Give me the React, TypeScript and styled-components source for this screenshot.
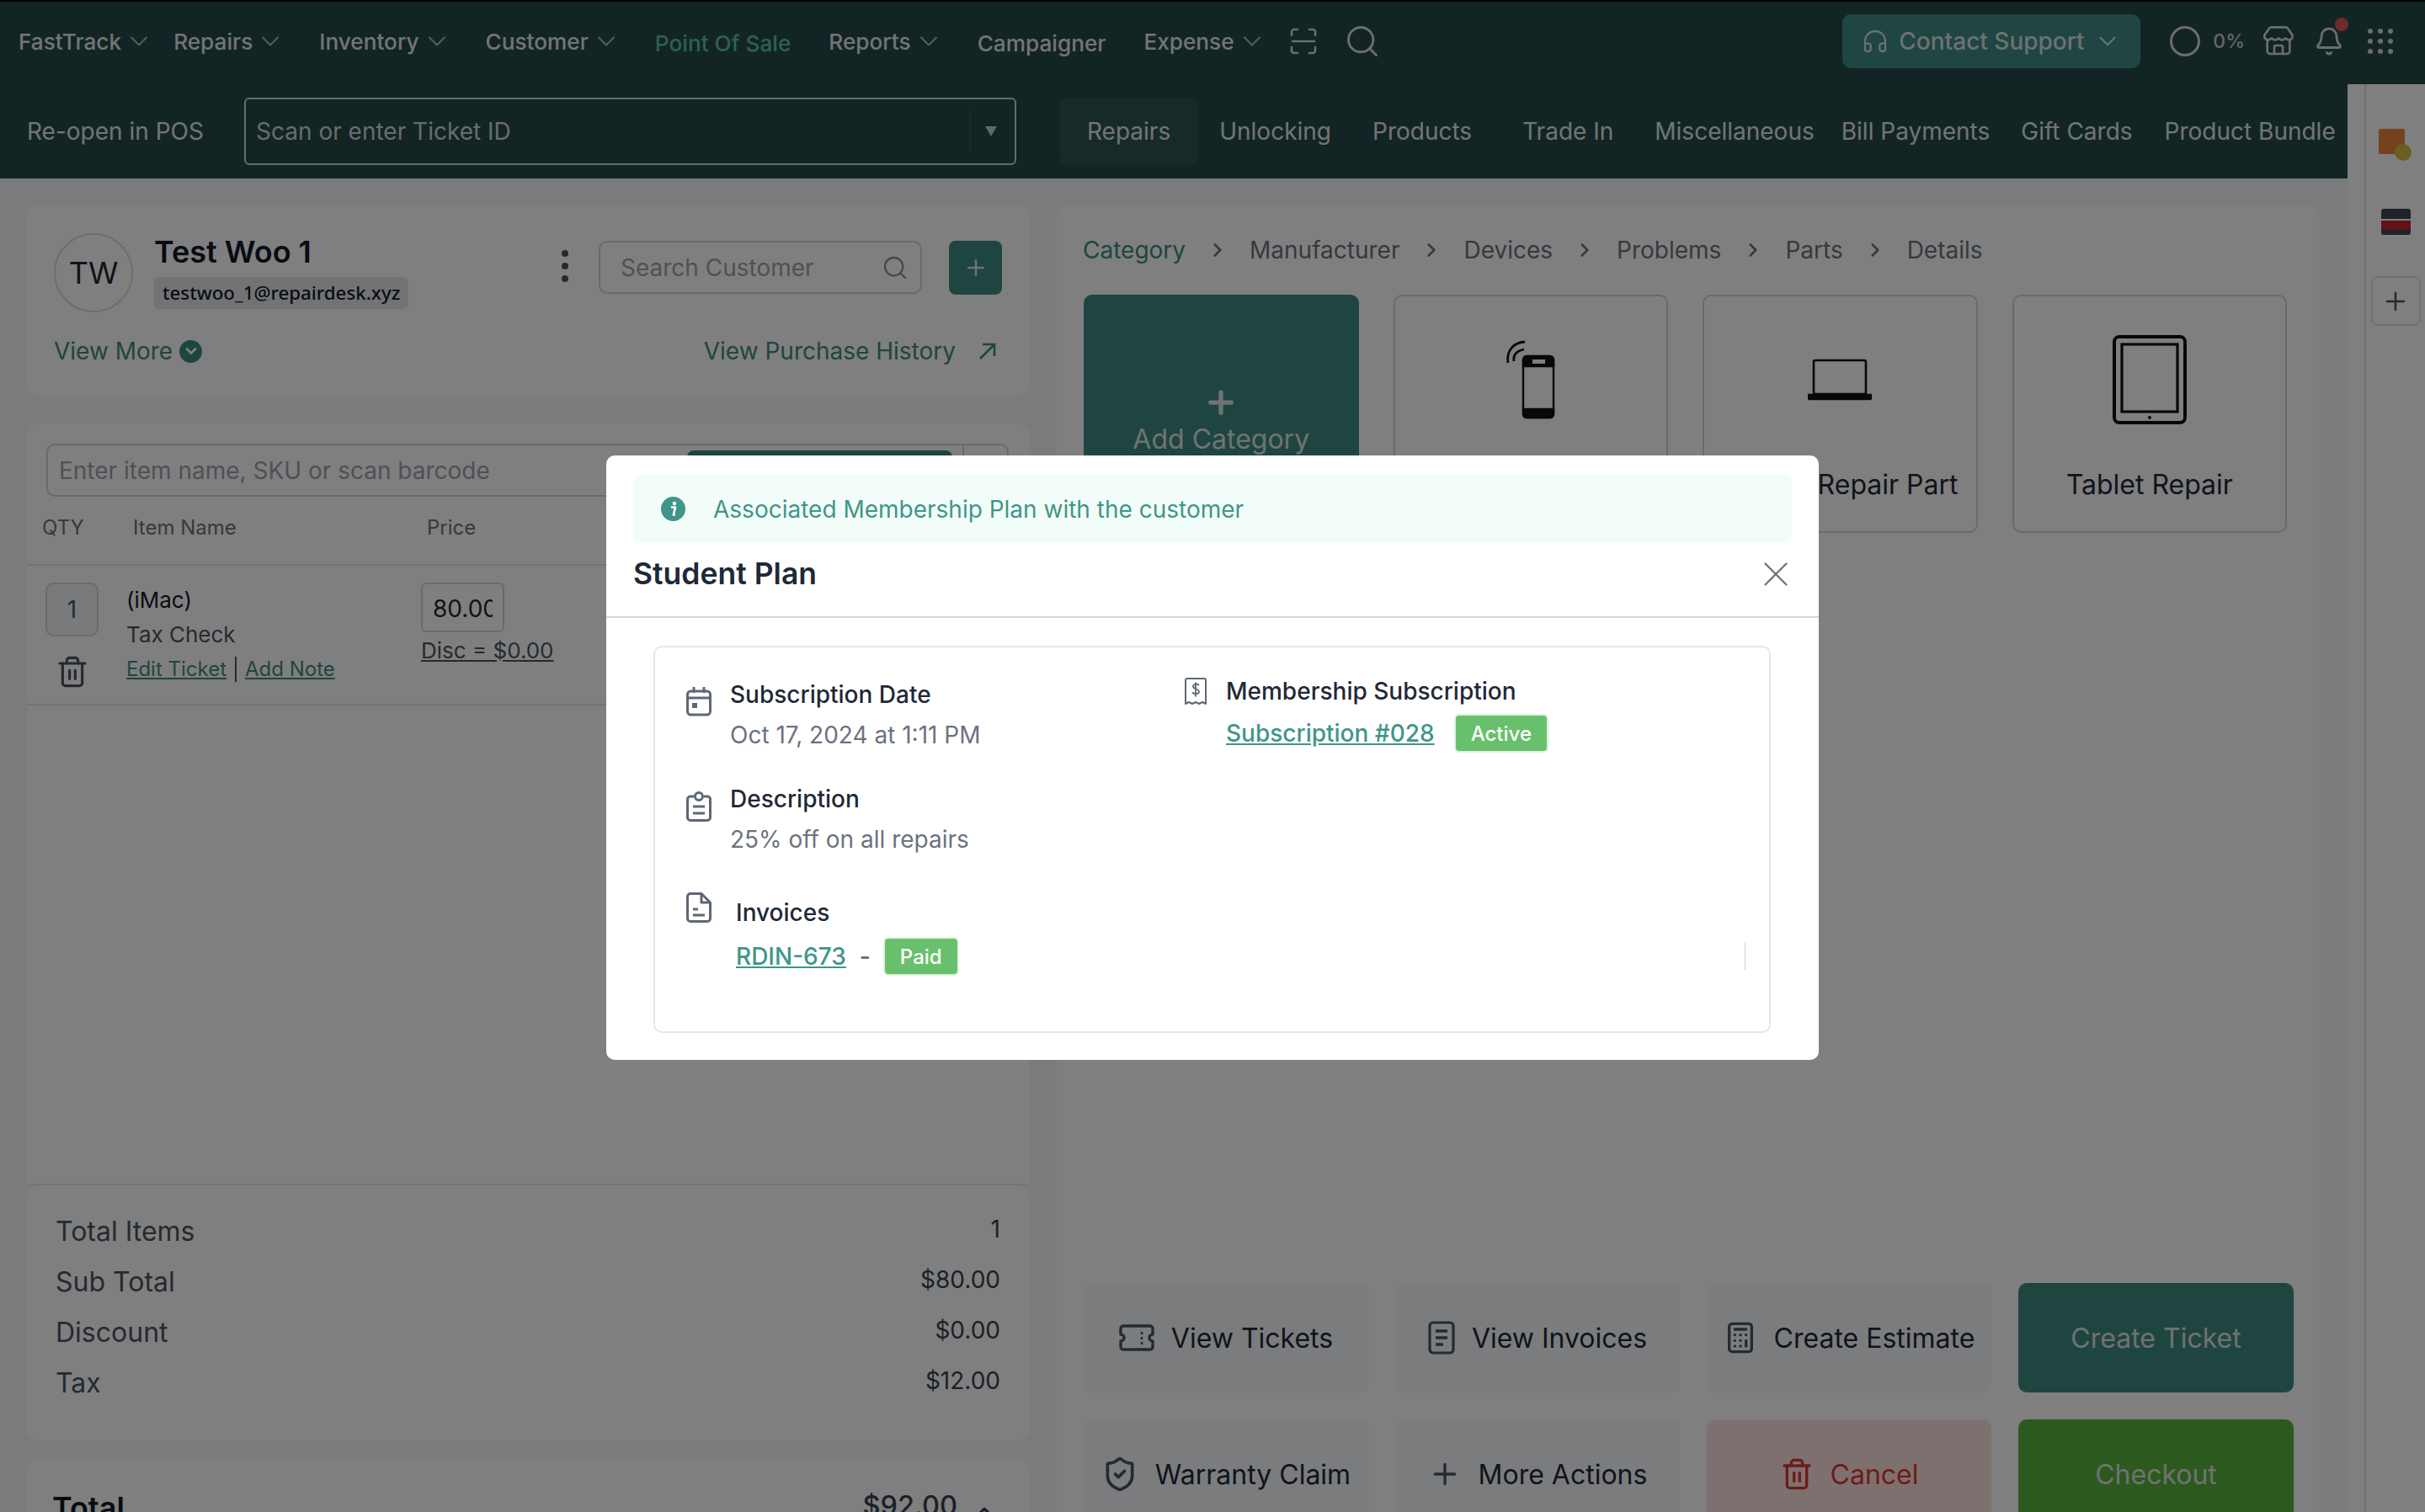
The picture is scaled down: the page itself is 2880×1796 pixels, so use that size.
import styled, { createGlobalStyle } from 'styled-components'
import {
  Bell,
  Calculator,
  ChevronDown,
  ChevronRight,
  ChevronUp,
  Headphones,
  Plus,
  Search,
  ShieldCheck,
  Store,
  Trash2,
  X,
} from 'lucide-react'

const GlobalStyle = createGlobalStyle`
  html, body {
    margin: 0;
    padding: 0;
    background: #f4f6f9;
  }
  * {
    box-sizing: border-box;
  }
  body {
    font-family: Inter, "Noto Sans", "Liberation Sans", sans-serif;
    color: #1f2937;
  }
`

const navItems = [
  { label: 'FastTrack', chevron: true, tight: true },
  { label: 'Repairs', chevron: true },
  { label: 'Inventory', chevron: true },
  { label: 'Customer', chevron: true },
  { label: 'Point Of Sale', active: true },
  { label: 'Reports', chevron: true },
  { label: 'Campaigner' },
  { label: 'Expense', chevron: true },
]

const tabs = [
  { label: 'Unlocking', gap: 26 },
  { label: 'Products', gap: 49 },
  { label: 'Trade In', gap: 60 },
  { label: 'Miscellaneous', gap: 49 },
  { label: 'Bill Payments', gap: 32 },
  { label: 'Gift Cards', gap: 37 },
  { label: 'Product Bundle', gap: 38 },
]

const crumbs = ['Category', 'Manufacturer', 'Devices', 'Problems', 'Parts', 'Details']

const totals = [
  { label: 'Total Items', value: '1' },
  { label: 'Sub Total', value: '$80.00' },
  { label: 'Discount', value: '$0.00' },
  { label: 'Tax', value: '$12.00' },
]

function ScanIcon() {
  return (
    <svg width="32" height="32" viewBox="0 0 32 32" fill="none" stroke="#d7dbe0" strokeWidth="2.6" strokeLinecap="round">
      <path d="M2 9V5a3 3 0 0 1 3-3h4M23 2h4a3 3 0 0 1 3 3v4M2 23v4a3 3 0 0 0 3 3h4M23 30h4a3 3 0 0 0 3-3v-4M3 16h26" />
    </svg>
  )
}

function PhoneIcon() {
  return (
    <svg width="58" height="94" viewBox="0 0 58 94" fill="none" stroke="#111" strokeWidth="2.4">
      <rect x="20" y="19" width="36" height="73" rx="4" />
      <path d="M20 24a4 4 0 0 1 4-4h28a4 4 0 0 1 4 4v7H20z" fill="#111" />
      <rect x="31" y="23" width="15" height="5" fill="#fff" stroke="none" />
      <path d="M20 82h36v6a4 4 0 0 1-4 4H24a4 4 0 0 1-4-4z" fill="#111" />
      <path d="M2 27C0 14 7 3 22 2" strokeWidth="2.8" />
      <path d="M9 25c-1-7 2-12 12-14" strokeWidth="2.8" />
    </svg>
  )
}

function LaptopIcon() {
  return (
    <svg width="76" height="50" viewBox="0 0 76 50" fill="none" stroke="#111" strokeWidth="2.6">
      <rect x="7" y="2" width="62" height="40" rx="2" />
      <path d="M1 43h74v4a1 1 0 0 1-1 1H2a1 1 0 0 1-1-1z" fill="#111" />
    </svg>
  )
}

function TabletIcon() {
  return (
    <svg width="88" height="106" viewBox="0 0 88 106" fill="none" stroke="#111">
      <rect x="2" y="2" width="84" height="102" rx="6" strokeWidth="4" />
      <rect x="11" y="11" width="66" height="80" strokeWidth="3.2" />
      <circle cx="44" cy="98" r="2" fill="#111" stroke="none" />
    </svg>
  )
}

function InfoDot() {
  return (
    <svg width="29" height="29" viewBox="0 0 29 29">
      <circle cx="14.5" cy="14.5" r="14.5" fill="#3f9688" />
      <circle cx="16" cy="8" r="2.2" fill="#fff" />
      <path d="M12 12.5h5l-2.2 9h2" fill="none" stroke="#fff" strokeWidth="2.6" strokeLinejoin="round" />
    </svg>
  )
}

function CalendarIcon() {
  return (
    <svg width="30" height="36" viewBox="0 0 30 36" fill="none" stroke="#5f6776" strokeWidth="3">
      <rect x="1.5" y="6" width="27" height="28" rx="4" />
      <path d="M1.500 14h27M9 1v7M21 1v7" />
      <rect x="7" y="20" width="6" height="6" fill="#5f6776" stroke="none" />
    </svg>
  )
}

function ClipboardIcon() {
  return (
    <svg width="30" height="36" viewBox="0 0 30 36" fill="none" stroke="#5f6776" strokeWidth="3">
      <path d="M9 6H5a3.500 3.500 0 0 0-3.500 3.500V31A3.500 3.500 0 0 0 5 34.500h20a3.500 3.500 0 0 0 3.500-3.500V9.500A3.500 3.500 0 0 0 25 6h-4" />
      <circle cx="15" cy="6" r="4.500" />
      <path d="M8 18h14M8 26h14" />
    </svg>
  )
}

function InvoiceDocIcon() {
  return (
    <svg width="30" height="36" viewBox="0 0 30 36" fill="none" stroke="#5f6776" strokeWidth="3" strokeLinejoin="round">
      <path d="M5 1.500h13l10.500 10.500V31a3.500 3.500 0 0 1-3.500 3.500H5A3.500 3.500 0 0 1 1.500 31V5A3.500 3.500 0 0 1 5 1.500z" />
      <path d="M18 2v10h10M8 20h6M8 27h14" />
    </svg>
  )
}

function ReceiptIcon() {
  return (
    <svg width="28" height="34" viewBox="0 0 28 34" fill="none" stroke="#5f6776" strokeWidth="2">
      <path d="M2 31V3a2 2 0 0 1 2-2h20a2 2 0 0 1 2 2v28l-4-2-4 2-4-2-4 2-4-2-4 2z" strokeLinejoin="round" />
      <path d="M18 9c-1-2-7-2-7 1.500s7 2.500 7 6-6 3-8 1M14 5.500v17" strokeWidth="1.8" />
    </svg>
  )
}

function TicketIcon() {
  return (
    <svg width="42" height="34" viewBox="0 0 42 34" fill="none" stroke="#4b5563" strokeWidth="3.4" strokeLinejoin="round">
      <path d="M2 6a3 3 0 0 1 3-3h32a3 3 0 0 1 3 3v7a4 4 0 0 0 0 8v7a3 3 0 0 1-3 3H5a3 3 0 0 1-3-3v-7a4 4 0 0 0 0-8z" />
      <path d="M27 10v3M27 16v3M27 22v3" strokeWidth="2.6" />
    </svg>
  )
}

function InvoiceIcon() {
  return (
    <svg width="32" height="40" viewBox="0 0 32 40" fill="none" stroke="#4b5563" strokeWidth="3.2">
      <rect x="2" y="2" width="28" height="36" rx="4" />
      <path d="M9 12h14M9 20h14M9 28h9" strokeWidth="3.6" />
    </svg>
  )
}

export default function App() {
  return (
    <>
      <GlobalStyle />
      <Page>
        <TopBar>
          <NavList>
            {navItems.map((item) => (
              <NavItem key={item.label} $active={item.active} $plain={!item.chevron} $tight={item.tight}>
                {item.label}
                {item.chevron && <ChevronDown size={36} strokeWidth={1.4} color="#aeb6bb" />}
              </NavItem>
            ))}
            <NavIcon $gap={-13}>
              <ScanIcon />
            </NavIcon>
            <NavIcon $gap={-13}>
              <Search size={44} strokeWidth={1.6} color="#d7dbe0" />
            </NavIcon>
          </NavList>
          <TopRight>
            <SupportButton>
              <Headphones size={32} strokeWidth={1.7} />
              <span>Contact Support</span>
              <ChevronDown size={34} strokeWidth={1.6} />
            </SupportButton>
            <Progress>
              <ProgressRing />
              <span>0%</span>
            </Progress>
            <StoreWrap>
              <Store size={40} strokeWidth={1.6} color="#d7dbe0" />
            </StoreWrap>
            <BellWrap>
              <Bell size={36} strokeWidth={1.9} color="#d7dbe0" />
              <BellDot />
            </BellWrap>
            <DotGrid>
              {Array.from({ length: 9 }).map((_, i) => (
                <i key={i} />
              ))}
            </DotGrid>
          </TopRight>
        </TopBar>

        <Body>
          <Content>
            <SubBar>
              <ReopenLabel>Re-open in POS</ReopenLabel>
              <TicketSelect>
                <span>Scan or enter Ticket ID</span>
                <SelectArrow />
              </TicketSelect>
              <ActiveTab>Repairs</ActiveTab>
              {tabs.map((tab) => (
                <Tab key={tab.label} $gap={tab.gap}>
                  {tab.label}
                </Tab>
              ))}
            </SubBar>

            <Main>
              <LeftColumn>
                <CustomerCard>
                  <CustomerTop>
                    <Avatar>TW</Avatar>
                    <CustomerInfo>
                      <CustomerName>Test Woo 1</CustomerName>
                      <EmailChip>testwoo_1@repairdesk.xyz</EmailChip>
                    </CustomerInfo>
                    <MenuDots>
                      <i />
                      <i />
                      <i />
                    </MenuDots>
                    <CustomerSearch>
                      <span>Search Customer</span>
                      <Search size={32} strokeWidth={1.7} color="#8b929c" />
                    </CustomerSearch>
                    <AddButton>
                      <Plus size={30} strokeWidth={2} />
                    </AddButton>
                  </CustomerTop>
                  <CustomerLinks>
                    <ViewMore>
                      View More
                      <CheckCircle>
                        <ChevronDown size={20} strokeWidth={3.4} />
                      </CheckCircle>
                    </ViewMore>
                    <HistoryLink>
                      View Purchase History
                      <svg width="22" height="22" viewBox="0 0 22 22" fill="none" stroke="#3e8a80" strokeWidth="2.6">
                        <path d="M3 20 19 4M6 3h14v14" />
                      </svg>
                    </HistoryLink>
                  </CustomerLinks>
                </CustomerCard>

                <ItemsCard>
                  <ItemSearch>
                    <ItemPlaceholder>Enter item name, SKU or scan barcode</ItemPlaceholder>
                    <ItemSearchButton />
                    <ItemDivider />
                  </ItemSearch>
                  <ItemsHeader>
                    <span>QTY</span>
                    <span>Item Name</span>
                    <span>Price</span>
                  </ItemsHeader>
                  <ItemRow>
                    <QtyCell>
                      <QtyBox>1</QtyBox>
                      <Trash2 size={40} strokeWidth={1.9} color="#4b5563" />
                    </QtyCell>
                    <NameCell>
                      <ItemTitle>(iMac)</ItemTitle>
                      <ItemSub>Tax Check</ItemSub>
                      <ItemLinks>
                        <a>Edit Ticket</a>
                        <LinkBar />
                        <a>Add Note</a>
                      </ItemLinks>
                    </NameCell>
                    <PriceCell>
                      <PriceInput readOnly value="80.00" />
                      <DiscLink>Disc = $0.00</DiscLink>
                    </PriceCell>
                  </ItemRow>
                </ItemsCard>

                <SummaryCard>
                  {totals.map((row) => (
                    <SummaryRow key={row.label}>
                      <SummaryLabel>{row.label}</SummaryLabel>
                      <SummaryValue>{row.value}</SummaryValue>
                    </SummaryRow>
                  ))}
                </SummaryCard>

                <TotalCard>
                  <TotalLabel>Total</TotalLabel>
                  <TotalValue>
                    $92.00
                    <ChevronUp size={24} strokeWidth={3} />
                  </TotalValue>
                </TotalCard>
              </LeftColumn>

              <RightPanel>
                <Breadcrumb>
                  {crumbs.map((crumb, i) => (
                    <Crumb key={crumb} $active={i === 0}>
                      {i > 0 && <ChevronRight size={26} strokeWidth={2.4} color="#6b7280" />}
                      <span>{crumb}</span>
                    </Crumb>
                  ))}
                </Breadcrumb>
                <CategoryGrid>
                  <AddCategory>
                    <Plus size={42} strokeWidth={3} />
                    <span>Add Category</span>
                  </AddCategory>
                  <CategoryCard>
                    <CategoryIcon>
                      <PhoneIcon />
                    </CategoryIcon>
                    <span>Phone Repair</span>
                  </CategoryCard>
                  <CategoryCard>
                    <CategoryIcon>
                      <LaptopIcon />
                    </CategoryIcon>
                    <span>Laptop Repair Part</span>
                  </CategoryCard>
                  <CategoryCard>
                    <CategoryIcon>
                      <TabletIcon />
                    </CategoryIcon>
                    <span>Tablet Repair</span>
                  </CategoryCard>
                </CategoryGrid>
                <ActionGrid>
                  <ActionButton>
                    <TicketIcon />
                    View Tickets
                  </ActionButton>
                  <ActionButton>
                    <InvoiceIcon />
                    View Invoices
                  </ActionButton>
                  <ActionButton>
                    <Calculator size={40} strokeWidth={2} color="#4b5563" />
                    Create Estimate
                  </ActionButton>
                  <ActionButton $variant="primary">Create Ticket</ActionButton>
                  <ActionButton>
                    <ShieldCheck size={44} strokeWidth={2} color="#4b5563" />
                    Warranty Claim
                  </ActionButton>
                  <ActionButton>
                    <Plus size={40} strokeWidth={2} color="#4b5563" />
                    More Actions
                  </ActionButton>
                  <ActionButton $variant="danger">
                    <Trash2 size={40} strokeWidth={2} color="#d63a35" />
                    Cancel
                  </ActionButton>
                  <ActionButton $variant="success">Checkout</ActionButton>
                </ActionGrid>
              </RightPanel>
            </Main>
          </Content>

          <Rail>
            <RailInner>
              <RailOrange>
                <i />
              </RailOrange>
              <RailStack />
              <RailPlus>
                <Plus size={34} strokeWidth={1.8} color="#4b5563" />
              </RailPlus>
            </RailInner>
          </Rail>
        </Body>

        <Overlay>
          <Modal>
            <Alert>
              <InfoDot />
              <span>Associated Membership Plan with the customer</span>
            </Alert>
            <ModalHead>
              <ModalTitle>Student Plan</ModalTitle>
              <X size={50} strokeWidth={1.1} color="#6b7280" />
            </ModalHead>
            <ModalBody>
              <DetailCard>
                <DetailColumns>
                  <div>
                    <Section>
                      <SectionIcon $top={14}>
                        <CalendarIcon />
                      </SectionIcon>
                      <div>
                        <SectionTitle>Subscription Date</SectionTitle>
                        <SectionText>Oct 17, 2024 at 1:11 PM</SectionText>
                      </div>
                    </Section>
                    <Section $space={28}>
                      <SectionIcon $top={15}>
                        <ClipboardIcon />
                      </SectionIcon>
                      <div>
                        <SectionTitle>Description</SectionTitle>
                        <SectionText>25% off on all repairs</SectionText>
                      </div>
                    </Section>
                  </div>
                  <MembershipColumn>
                    <Section>
                      <SectionIcon $top={8} $shift={3}>
                        <ReceiptIcon />
                      </SectionIcon>
                      <div>
                        <SectionTitle>Membership Subscription</SectionTitle>
                        <LinkRow>
                          <TealLink>Subscription #028</TealLink>
                          <StatusBadge $gap={23}>Active</StatusBadge>
                        </LinkRow>
                      </div>
                    </Section>
                  </MembershipColumn>
                </DetailColumns>
                <InvoiceSection>
                  <SectionIcon $top={0}>
                    <InvoiceDocIcon />
                  </SectionIcon>
                  <InvoiceBody>
                    <SectionTitle>Invoices</SectionTitle>
                    <LinkRow $down={2}>
                      <TealLink>RDIN-673</TealLink>
                      <Dash>-</Dash>
                      <StatusBadge $gap={15}>Paid</StatusBadge>
                      <ScrollTick />
                    </LinkRow>
                  </InvoiceBody>
                </InvoiceSection>
              </DetailCard>
            </ModalBody>
          </Modal>
        </Overlay>
      </Page>
    </>
  )
}

const Page = styled.div`
  position: relative;
  width: 2880px;
  height: 1796px;
  overflow: hidden;
  background: #f4f6f9;
`

const TopBar = styled.header`
  height: 100px;
  display: flex;
  align-items: center;
  justify-content: space-between;
  padding: 0 38px 4px 22px;
  background: #244a48;
  border-top: 2px solid #000;
`

const NavList = styled.nav`
  display: flex;
  align-items: center;
  gap: 45px;
`

const NavItem = styled.div<{ $active?: boolean; $plain?: boolean; $tight?: boolean }>`
  display: flex;
  align-items: center;
  gap: 10px;
  font-size: 26.200px;
  font-weight: 500;
  white-space: nowrap;
  color: ${(p) => (p.$active ? '#5fc09f' : '#e6e9ec')};
  margin-top: ${(p) => (p.$plain ? '4px' : '0')};
  margin-right: ${(p) => (p.$tight ? '-17px' : '0')};

  svg {
    margin: -4px -5px -4px -7px;
  }
`

const NavIcon = styled.div<{ $gap: number }>`
  display: flex;
  margin-left: ${(p) => p.$gap}px;
`

const TopRight = styled.div`
  display: flex;
  align-items: center;
  gap: 22px;
`

const SupportButton = styled.div`
  width: 354px;
  height: 64px;
  display: flex;
  align-items: center;
  gap: 12px;
  padding: 0 18px 0 23px;
  margin-right: 13px;
  border-radius: 10px;
  background: #3e8d84;
  color: #dbe3e4;
  font-size: 28px;
  font-weight: 500;
  white-space: nowrap;

  svg:last-child {
    margin: 0 -6px 0 -2px;
  }
`

const Progress = styled.div`
  display: flex;
  align-items: center;
  gap: 15px;
  font-size: 23px;
  font-weight: 500;
  color: #c6cbd1;
`

const ProgressRing = styled.div`
  width: 36px;
  height: 36px;
  border-radius: 50%;
  border: 3px solid #d7dbe0;
`

const StoreWrap = styled.div`
  display: flex;
  margin: 0 -2px;
`

const BellWrap = styled.div`
  position: relative;
  display: flex;
  margin: 0 6px 0 2px;
`

const BellDot = styled.div`
  position: absolute;
  top: -10px;
  right: -5px;
  width: 16px;
  height: 16px;
  border-radius: 50%;
  background: #e25454;
`

const DotGrid = styled.div`
  display: grid;
  grid-template-columns: repeat(3, 6px);
  gap: 6px;

  i {
    width: 6px;
    height: 6px;
    border-radius: 50%;
    background: #d7dbe0;
  }
`

const Body = styled.div`
  display: flex;
`

const Content = styled.div`
  width: 2788px;
  flex-shrink: 0;
`

const SubBar = styled.div`
  height: 112px;
  display: flex;
  align-items: center;
  padding-left: 32px;
  background: #244a48;
  color: #e6e9ec;
  font-size: 28px;
  white-space: nowrap;
`

const ReopenLabel = styled.div`
  width: 258px;
  flex-shrink: 0;
`

const TicketSelect = styled.div`
  position: relative;
  width: 917px;
  height: 80px;
  display: flex;
  align-items: center;
  padding-left: 12px;
  border: 2px solid #d1d5db;
  border-radius: 6px;
  background: #244a48;
  color: #d5d9dd;
`

const SelectArrow = styled.div`
  position: absolute;
  top: 12px;
  right: 52px;
  height: 52px;
  border-left: 1px solid #3d5c5a;

  &::after {
    content: '';
    position: absolute;
    top: 20px;
    left: 17px;
    border-left: 7px solid transparent;
    border-right: 7px solid transparent;
    border-top: 12px solid #c9cfd3;
  }
`

const ActiveTab = styled.div`
  height: 80px;
  margin-left: 52px;
  padding: 0 32px;
  display: flex;
  align-items: center;
  border-radius: 8px;
  background: #2c5653;
`

const Tab = styled.div<{ $gap: number }>`
  margin-left: ${(p) => p.$gap}px;
`

const Main = styled.main`
  display: flex;
  gap: 33px;
  padding: 32px 32px 0;
`

const LeftColumn = styled.div`
  width: 1190px;
  flex-shrink: 0;
  display: flex;
  flex-direction: column;
`

const CustomerCard = styled.section`
  height: 226px;
  padding: 33px 31px 0 32px;
  background: #fff;
  border-radius: 12px;
`

const CustomerTop = styled.div`
  display: flex;
  align-items: flex-start;
`

const Avatar = styled.div`
  width: 94px;
  height: 94px;
  display: flex;
  align-items: center;
  justify-content: center;
  border: 2px solid #d7dade;
  border-radius: 50%;
  font-size: 36px;
  color: #1f2937;
`

const CustomerInfo = styled.div`
  width: 486px;
  margin-left: 25px;
`

const CustomerName = styled.div`
  height: 44px;
  font-size: 36px;
  font-weight: 600;
  line-height: 44px;
  color: #111827;
`

const EmailChip = styled.div`
  display: inline-block;
  height: 38px;
  margin-top: 8px;
  padding: 0 10px;
  border-radius: 6px;
  background: #e5e7eb;
  font-family: "Noto Sans", "Open Sans", sans-serif;
  font-size: 22.3px;
  font-weight: 500;
  line-height: 37px;
  color: #111827;
`

const MenuDots = styled.div`
  width: 42px;
  margin-top: 20px;
  margin-left: -2px;
  display: flex;
  flex-direction: column;
  align-items: flex-start;
  gap: 7px;

  i {
    width: 8px;
    height: 8px;
    border-radius: 50%;
    background: #4b5563;
  }
`

const CustomerSearch = styled.div`
  width: 384px;
  height: 63px;
  margin-top: 9px;
  margin-left: 2px;
  display: flex;
  align-items: center;
  justify-content: space-between;
  padding: 0 14px 0 24px;
  border: 2px solid #d1d5db;
  border-radius: 10px;
  font-size: 28px;
  color: #9ca3af;
`

const AddButton = styled.div`
  width: 63px;
  height: 64px;
  margin: 9px 0 0 32px;
  display: flex;
  align-items: center;
  justify-content: center;
  border-radius: 8px;
  background: #3e8a80;
  color: #dfe7e6;
`

const CustomerLinks = styled.div`
  margin-top: 29px;
  margin-right: 8px;
  display: flex;
  align-items: center;
  justify-content: space-between;
`

const ViewMore = styled.div`
  display: flex;
  align-items: center;
  gap: 8px;
  font-size: 28px;
  color: #3e8a80;
`

const CheckCircle = styled.span`
  width: 27px;
  height: 27px;
  display: flex;
  align-items: center;
  justify-content: center;
  border-radius: 50%;
  background: #3e8a80;
  color: #fff;
`

const HistoryLink = styled.div`
  display: flex;
  align-items: center;
  gap: 26px;
  font-size: 28px;
  color: #3e8a80;
`

const ItemsCard = styled.section`
  height: 903px;
  margin-top: 33px;
  padding-top: 24px;
  background: #fff;
  border-radius: 12px 12px 0 0;
`

const ItemSearch = styled.div`
  height: 63px;
  margin: 0 24px 0 23px;
  display: flex;
  border: 2px solid #d1d5db;
  border-radius: 10px;
`

const ItemPlaceholder = styled.div`
  width: 759px;
  padding-left: 13px;
  font-size: 28px;
  line-height: 60px;
  color: #9ca3af;
`

const ItemSearchButton = styled.div`
  width: 315px;
  height: 55px;
  margin-top: 6px;
  border-radius: 8px;
  background: #3e8a80;
`

const ItemDivider = styled.div`
  margin-left: 12px;
  border-left: 2px solid #d1d5db;
`

const ItemsHeader = styled.div`
  height: 82px;
  padding: 0 0 8px 18px;
  display: grid;
  grid-template-columns: 108px 349px 1fr;
  align-items: center;
  border-bottom: 2px solid #e5e7eb;
  font-size: 24px;
  color: #6b7280;
`

const ItemRow = styled.div`
  height: 166px;
  padding: 20px 0 0 22px;
  display: grid;
  grid-template-columns: 96px 350px 1fr;
  border-bottom: 2px solid #e5e7eb;
`

const QtyCell = styled.div`
  display: flex;
  flex-direction: column;
  align-items: center;
  width: 63px;
  gap: 22px;
`

const QtyBox = styled.div`
  width: 63px;
  height: 64px;
  display: flex;
  align-items: center;
  justify-content: center;
  border: 2px solid #d1d5db;
  border-radius: 10px;
  background: #f3f4f6;
  font-size: 28px;
  color: #4b5563;
`

const NameCell = styled.div`
  display: flex;
  flex-direction: column;
  font-size: 26px;
  line-height: 41px;
`

const ItemTitle = styled.div`
  color: #111827;
`

const ItemSub = styled.div`
  color: #4b5563;
`

const ItemLinks = styled.div`
  display: flex;
  align-items: center;
  gap: 10px;
  font-size: 24px;
  color: #3e8a80;
  white-space: nowrap;

  a {
    text-decoration: underline;
  }
`

const LinkBar = styled.span`
  width: 2px;
  height: 30px;
  background: #4b5563;
`

const PriceCell = styled.div`
  display: flex;
  flex-direction: column;
`

const PriceInput = styled.input`
  width: 99px;
  height: 59px;
  padding: 2px 12px 0;
  border: 2px solid #d1d5db;
  border-radius: 6px;
  outline: none;
  background: #fff;
  font-family: inherit;
  font-size: 28px;
  color: #1f2937;
`

const DiscLink = styled.div`
  margin-top: 6px;
  font-size: 26px;
  color: #4b5563;
  text-decoration: underline;
  white-space: nowrap;
`

const SummaryCard = styled.section`
  height: 305px;
  padding: 24px 34px 0;
  background: #fff;
  border-top: 2px solid #e5e7eb;
  border-radius: 12px;
`

const SummaryRow = styled.div`
  height: 60px;
  display: flex;
  align-items: center;
  justify-content: space-between;
`

const SummaryLabel = styled.span`
  font-size: 32px;
  color: #4b5563;
`

const SummaryValue = styled.span`
  margin-top: -4px;
  font-size: 28px;
  color: #374151;
`

const TotalCard = styled.section`
  height: 120px;
  margin-top: 22px;
  padding: 36px 34px 0 30px;
  display: flex;
  justify-content: space-between;
  background: #fff;
  border-radius: 12px;
`

const TotalLabel = styled.div`
  font-size: 36px;
  font-weight: 600;
  color: #111827;
`

const TotalValue = styled.div`
  display: flex;
  align-items: flex-start;
  gap: 20px;
  margin-right: 7px;
  font-size: 32.500px;
  font-weight: 500;
  color: #374151;

  svg {
    margin-top: 14px;
  }
`

const RightPanel = styled.section`
  width: 1500px;
  height: 1592px;
  padding: 28px 32px 20px 32px;
  display: flex;
  flex-direction: column;
  background: #fff;
  border-radius: 12px;
`

const Breadcrumb = styled.div`
  height: 50px;
  margin-left: -1px;
  display: flex;
  align-items: center;
  gap: 25px;
  font-size: 28px;
  white-space: nowrap;
`

const Crumb = styled.div<{ $active?: boolean }>`
  display: flex;
  align-items: center;
  gap: 25px;
  color: ${(p) => (p.$active ? '#3e8a80' : '#6b7280')};
`

const CategoryGrid = styled.div`
  margin-top: 28px;
  padding-right: 7px;
  display: grid;
  grid-template-columns: repeat(4, 1fr);
  gap: 41px;
`

const CategoryCard = styled.div`
  height: 283px;
  display: flex;
  flex-direction: column;
  align-items: center;
  border: 2px solid #d1d5db;
  border-radius: 10px;
  font-size: 32px;
  color: #1f2937;
  white-space: nowrap;
`

const CategoryIcon = styled.div`
  height: 198px;
  margin-bottom: 6px;
  display: flex;
  align-items: center;
  justify-content: center;
`

const AddCategory = styled.div`
  height: 283px;
  padding-top: 107px;
  display: flex;
  flex-direction: column;
  align-items: center;
  gap: 3px;
  border-radius: 10px;
  background: #3e8a80;
  color: #dfe7e6;
  font-size: 32px;
`

const ActionGrid = styled.div`
  margin-top: auto;
  display: grid;
  grid-template-columns: 338px 338px 338px 327px;
  grid-auto-rows: 130px;
  gap: 32px;
`

const ActionButton = styled.div<{ $variant?: 'primary' | 'danger' | 'success' }>`
  display: flex;
  align-items: center;
  justify-content: center;
  gap: 20px;
  border-radius: 10px;
  font-size: 32px;
  white-space: nowrap;
  color: ${(p) =>
    p.$variant === 'danger' ? '#d63a35' : p.$variant ? '#dfe5e4' : '#1f2937'};
  background: ${(p) =>
    p.$variant === 'primary'
      ? '#3e8a80'
      : p.$variant === 'danger'
        ? '#ffe0e0'
        : p.$variant === 'success'
          ? '#58b33c'
          : '#f6f8fb'};
`

const Rail = styled.aside`
  width: 92px;
  height: 1696px;
  padding-left: 20px;
  background: #fff;
`

const RailInner = styled.div`
  height: 100%;
  border-left: 2px solid #e5e7eb;
  display: flex;
  flex-direction: column;
  align-items: center;
`

const RailOrange = styled.div`
  position: relative;
  left: -5px;
  width: 31px;
  height: 30px;
  margin-top: 53px;
  border-radius: 2px;
  background: #e8873c;

  i {
    position: absolute;
    right: -8px;
    top: 18px;
    width: 20px;
    height: 20px;
    border-radius: 50%;
    background: #d8bb45;
  }
`

const RailStack = styled.div`
  width: 35px;
  height: 31px;
  margin-top: 65px;
  border-radius: 3px;
  background: linear-gradient(
    #3f4752 0 38%,
    #ffffff 38% 45%,
    #c4242a 45% 80%,
    #3f4752 80%
  );
`

const RailPlus = styled.div`
  width: 59px;
  height: 59px;
  margin-top: 49px;
  display: flex;
  align-items: center;
  justify-content: center;
  border: 2px solid #e0e3e7;
  border-radius: 8px;
`

const Overlay = styled.div`
  position: absolute;
  inset: 0;
  display: flex;
  justify-content: center;
  padding-top: 541px;
  background: rgba(0, 0, 0, 0.5);
`

const Modal = styled.div`
  width: 1440px;
  height: 718px;
  padding-top: 23px;
  background: #fff;
  border-radius: 10px;
`

const Alert = styled.div`
  height: 81px;
  margin: 0 32px;
  padding-left: 33px;
  display: flex;
  align-items: center;
  gap: 33px;
  border-radius: 8px;
  background: #f2fdf9;
  font-size: 28px;
  color: #3f9688;
`

const ModalHead = styled.div`
  height: 89px;
  padding: 0 26px 14px 32px;
  display: flex;
  align-items: center;
  justify-content: space-between;
  border-bottom: 2px solid #d4d6d9;
`

const ModalTitle = styled.h2`
  margin: 0;
  font-size: 35.500px;
  font-weight: 600;
  color: #1f2937;
`

const ModalBody = styled.div`
  padding: 33px 57px 0 56px;
`

const DetailCard = styled.div`
  height: 460px;
  padding: 32px 36px 0;
  border: 2px solid #e5e7eb;
  border-radius: 10px;
`

const DetailColumns = styled.div`
  display: grid;
  grid-template-columns: 589px 1fr;
`

const MembershipColumn = styled.div`
  margin-top: -4px;
`

const Section = styled.div<{ $space?: number }>`
  display: flex;
  gap: 17px;
  margin-top: ${(p) => p.$space ?? 0}px;
`

const SectionIcon = styled.div<{ $top: number; $shift?: number }>`
  width: 36px;
  flex-shrink: 0;
  display: flex;
  justify-content: flex-start;
  padding-left: ${(p) => p.$shift ?? 1}px;
  margin-top: ${(p) => p.$top}px;
`

const SectionTitle = styled.div`
  height: 48px;
  font-size: 28px;
  font-weight: 500;
  line-height: 48px;
  color: #1f2937;
  white-space: nowrap;
`

const SectionText = styled.div`
  height: 48px;
  font-size: 28px;
  line-height: 48px;
  color: #6b7280;
`

const LinkRow = styled.div<{ $down?: number }>`
  display: flex;
  align-items: center;
  height: 52px;
  margin-top: ${(p) => p.$down ?? 0}px;
`

const TealLink = styled.a`
  font-size: 28px;
  font-weight: 500;
  color: #3f9688;
  text-decoration: underline;
`

const StatusBadge = styled.span<{ $gap: number }>`
  height: 46px;
  margin-left: ${(p) => p.$gap}px;
  padding: 0 18px;
  display: flex;
  align-items: center;
  border: 2px solid #dff3df;
  border-radius: 6px;
  background: #69c06c;
  color: #fff;
  font-size: 24px;
  font-weight: 500;
`

const InvoiceSection = styled.div`
  display: flex;
  gap: 24px;
  margin-top: 39px;
`

const InvoiceBody = styled.div`
  flex: 1;
`

const Dash = styled.span`
  margin-left: 16px;
  font-size: 28px;
  font-weight: 600;
  color: #6b7280;
`

const ScrollTick = styled.span`
  height: 32px;
  margin-left: auto;
  margin-right: -8px;
  border-left: 1px solid #c9cdd2;
`
